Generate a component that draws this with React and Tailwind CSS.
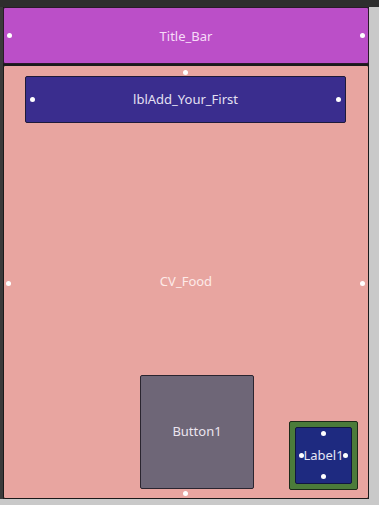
import React from "react";

const Dot = ({ className }) => (
  <span className={"absolute w-[5px] h-[5px] rounded-full bg-white " + className} />
);

export default function App() {
  return (
    <div
      className="w-[379px] h-[505px] flex flex-col bg-[#c9c9c9] overflow-hidden"
      style={{ fontFamily: '"Noto Sans", "Open Sans", sans-serif' }}
    >
      <div className="h-[7px] bg-[#2e2e2e] shrink-0" />
      <div className="flex h-[492px]">
        <div className="w-[3px] bg-[#3a3a3a] shrink-0" />
        <div className="w-[366px] flex flex-col shrink-0 bg-[#1a1a1a]">
          <div className="relative h-[57px] pt-[2px] bg-[#bb4fc8] border border-[#2a1a2a] rounded-[2px] flex items-center justify-center text-[13px] text-[#f7dcf8]">
            Title_Bar
            <Dot className="left-[3px] top-[25px]" />
            <Dot className="right-[3px] top-[25px]" />
          </div>
          <div className="relative flex-1 mt-[1px] bg-[#e8a5a0] border border-[#1a1a1a] rounded-[2px] flex flex-col">
            <Dot className="left-[179px] top-[4px]" />
            <div className="relative mt-[10px] ml-[21px] w-[321px] h-[47px] bg-[#3a2d8e] border border-[#1e1a3a] rounded-[2px] flex items-center justify-center text-[13px] text-[#e4e0f2]">
              lblAdd_Your_First
              <Dot className="left-[4px] top-[20px]" />
              <Dot className="right-[4px] top-[20px]" />
            </div>
            <div className="absolute inset-0 flex items-center justify-center text-[13px] text-[#fdeae8] pointer-events-none">
              CV_Food
            </div>
            <Dot className="left-[2px] top-[215px]" />
            <Dot className="right-[3px] top-[215px]" />
            <Dot className="left-[179px] bottom-[2px]" />
            <div className="flex-1" />
            <div className="flex items-end">
              <div className="ml-[136px] mb-[9px] w-[114px] h-[114px] bg-[#6e6677] border border-[#2a2530] rounded-[2px] flex items-center justify-center text-[13px] text-[#ebe5ef]">
                Button1
              </div>
              <div className="ml-[35px] mb-[8px] w-[69px] h-[69px] bg-[#4b7b3a] border border-[#1c2a18] rounded-[2px] p-[5px]">
                <div className="relative w-full h-full bg-[#1e2a80] border border-[#101540] rounded-[2px] flex items-center justify-center text-[13px] text-[#e4e6f4]">
                  Label1
                  <Dot className="left-[25px] top-[3px]" />
                  <Dot className="left-[25px] bottom-[4px]" />
                  <Dot className="left-[3px] top-[25px]" />
                  <Dot className="right-[3px] top-[25px]" />
                </div>
              </div>
            </div>
          </div>
        </div>
        <div className="flex-1 bg-[#c9c9c9]" />
      </div>
      <div className="flex-1 bg-[#c9c9c9]" />
    </div>
  );
}
